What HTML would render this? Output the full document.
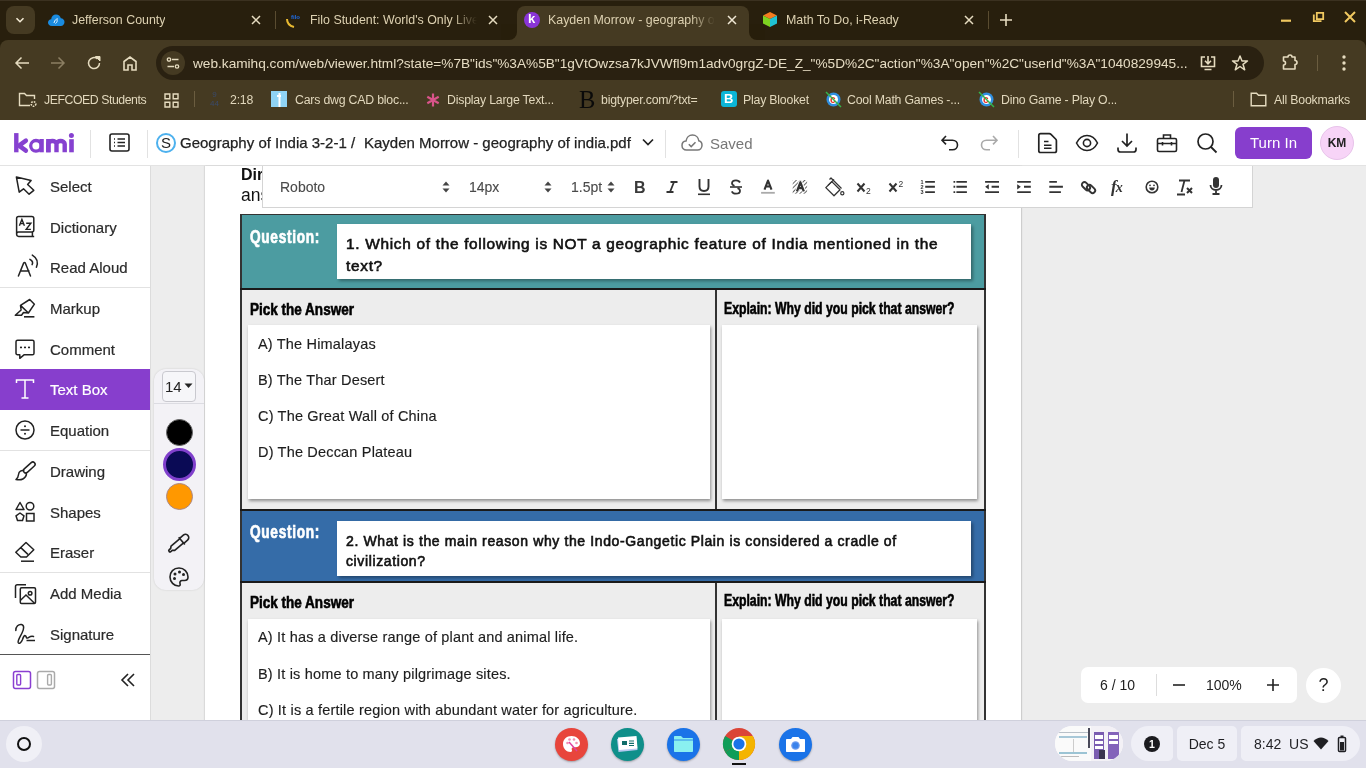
<!DOCTYPE html>
<html><head><meta charset="utf-8">
<style>
*{box-sizing:border-box;margin:0;padding:0}
html,body{width:1366px;height:768px;overflow:hidden;font-family:"Liberation Sans",sans-serif;background:#ededed}
#chromebg{left:0;top:0;width:1366px;height:120px;background:#271e0b}
.a{position:absolute}
svg{display:block;overflow:visible}
/* chrome */
#tabstrip{left:0;top:0;width:1366px;height:40px;background:#281f0d;border-top:1px solid #3b3120}
#toolbar{left:0;top:40px;width:1366px;height:80px;background:#453a22;border-radius:8px 8px 0 0}
.tabtxt{font-size:12.4px;color:#ddd1b1;white-space:nowrap;overflow:hidden}
.bm{font-size:12.3px;letter-spacing:-0.2px;color:#e2d8bd;white-space:nowrap;top:93px}
#omni{left:156px;top:46px;width:1108px;height:34px;border-radius:17px;background:#2a2111}
/* kami */
#header{left:0;top:120px;width:1366px;height:46px;background:#fff;border-bottom:1px solid #e3e3e3}
#sidebar{left:0;top:166px;width:151px;height:554px;background:#fff;border-right:1px solid #dcdcdc}
.si{left:0;width:150px;height:40px}
.si span{position:absolute;left:50px;top:11px;font-size:15px;color:#2b2b2b}
.si svg{position:absolute;left:14px;top:10px}
.sdiv{left:0;width:150px;height:1px;background:#e2e2e2}
#page{left:205px;top:166px;width:816px;height:554px;background:#fff;box-shadow:1px 0 1px rgba(0,0,0,0.13),-1px 0 1px rgba(0,0,0,0.08)}
#shelf{left:0;top:720px;width:1366px;height:48px;background:#e1e1ec;border-top:1px solid #cfd0dc}

.qlab{font-size:18px;font-weight:bold;color:#fff;-webkit-text-stroke:0.7px #fff;letter-spacing:0.9px;transform:scaleX(0.76);transform-origin:left top;white-space:nowrap}
.qbox{background:#fff;box-shadow:2px 2px 3px rgba(0,0,0,0.35)}
.qtxt{font-size:15.4px;font-weight:normal;-webkit-text-stroke:0.6px #111;color:#111;line-height:21.7px;letter-spacing:0.7px;white-space:nowrap}
.plab{font-size:16px;font-weight:bold;color:#000;-webkit-text-stroke:0.6px #000;transform:scaleX(0.845);transform-origin:left top;white-space:nowrap}
.abox{background:#fff;box-shadow:1px 2px 3px rgba(0,0,0,0.4)}
.atxt{font-size:14.5px;color:#1e1e1e;-webkit-text-stroke:0.15px #1e1e1e;letter-spacing:0.18px;white-space:nowrap}
</style></head><body><div id="wrap" style="position:absolute;left:0;top:0;width:1366px;height:768px;overflow:hidden;will-change:transform">

<div id="chromebg" class="a"></div>
<!-- TAB STRIP -->
<div id="tabstrip" class="a"></div>
<div class="a" style="left:6px;top:6px;width:29px;height:28px;border-radius:8px;background:#453a22"></div>
<svg class="a" style="left:15px;top:15px" width="10" height="10" viewBox="0 0 10 10"><path d="M1.5 3.2 L5 6.7 L8.5 3.2" stroke="#f3ead5" stroke-width="1.6" fill="none"/></svg>
<!-- tab1 -->
<svg class="a" style="left:48px;top:13px" width="17" height="14" viewBox="0 0 17 14"><path d="M4 13 C1 13 0 11 0 9.5 C0 7.5 1.5 6.3 3.2 6.2 C3.4 3.5 5.5 1.5 8 1.5 C10.5 1.5 12.3 3.2 12.8 5.2 C15 5.2 16.5 7 16.5 9 C16.5 11.3 15 13 12.8 13 Z" fill="#1a8be0"/><path d="M6 10 C6.5 7 8.5 5.5 10 6 M7.5 10.5 C9 9.5 9.5 8 9 7" stroke="#e8f4ff" stroke-width="1" fill="none"/></svg>
<div class="a tabtxt" style="left:72px;top:13px">Jefferson County</div>
<svg class="a" style="left:251px;top:15px" width="10" height="10" viewBox="0 0 10 10"><path d="M1 1L9 9M9 1L1 9" stroke="#e6dcc0" stroke-width="1.5"/></svg>
<div class="a" style="left:275px;top:11px;width:1px;height:18px;background:#5a4c30"></div>
<!-- tab2 -->
<svg class="a" style="left:285px;top:10px" width="16" height="18" viewBox="0 0 16 18"><path d="M2 9 C2 13 5 16 9 17" stroke="#e8b931" stroke-width="2" fill="none"/><text x="6" y="9" font-size="6" fill="#1f6be0" font-family="Liberation Sans" font-weight="bold">filo</text></svg>
<div class="a tabtxt" style="left:310px;top:13px;width:167px;-webkit-mask-image:linear-gradient(90deg,#000 85%,transparent)">Filo Student: World's Only Live Instant</div>
<svg class="a" style="left:488px;top:15px" width="10" height="10" viewBox="0 0 10 10"><path d="M1 1L9 9M9 1L1 9" stroke="#e6dcc0" stroke-width="1.5"/></svg>
<!-- active tab -->
<div class="a" style="left:517px;top:6px;width:232px;height:40px;border-radius:8px 8px 0 0;background:#453a22"></div>
<div class="a" style="left:509px;top:32px;width:8px;height:8px;background:#453a22"></div>
<div class="a" style="left:501px;top:24px;width:16px;height:16px;border-radius:0 0 8px 0;background:#271e0b"></div>
<div class="a" style="left:749px;top:32px;width:8px;height:8px;background:#453a22"></div>
<div class="a" style="left:749px;top:24px;width:16px;height:16px;border-radius:0 0 0 8px;background:#271e0b"></div>
<div class="a" style="left:524px;top:12px;width:16px;height:16px;border-radius:50%;background:#8a34d8"></div>
<div class="a" style="left:528px;top:11px;font-size:13px;font-weight:bold;color:#fff">k</div>
<div class="a tabtxt" style="left:548px;top:13px;width:167px;-webkit-mask-image:linear-gradient(90deg,#000 85%,transparent)">Kayden Morrow - geography of india.pdf</div>
<svg class="a" style="left:727px;top:15px" width="10" height="10" viewBox="0 0 10 10"><path d="M1 1L9 9M9 1L1 9" stroke="#f0e8d5" stroke-width="1.5"/></svg>
<!-- tab4 -->
<svg class="a" style="left:762px;top:11px" width="16" height="18" viewBox="0 0 16 18"><path d="M8 1 L15 4.5 L8 8 L1 4.5Z" fill="#f47c20"/><path d="M1 4.5 L8 8 L8 16 L1 12.5Z" fill="#7ed321"/><path d="M15 4.5 L8 8 L8 16 L15 12.5Z" fill="#1fc2d4"/></svg>
<div class="a tabtxt" style="left:786px;top:13px">Math To Do, i-Ready</div>
<svg class="a" style="left:964px;top:15px" width="10" height="10" viewBox="0 0 10 10"><path d="M1 1L9 9M9 1L1 9" stroke="#e6dcc0" stroke-width="1.5"/></svg>
<div class="a" style="left:988px;top:11px;width:1px;height:18px;background:#5a4c30"></div>
<svg class="a" style="left:999px;top:13px" width="14" height="14" viewBox="0 0 14 14"><path d="M7 1V13M1 7H13" stroke="#e6dcc0" stroke-width="1.6"/></svg>
<!-- window controls -->
<svg class="a" style="left:1280px;top:12px" width="14" height="14" viewBox="0 0 14 14"><path d="M1 8.7H11" stroke="#f0c860" stroke-width="2.2"/></svg>
<svg class="a" style="left:1311px;top:10px" width="14" height="14" viewBox="0 0 14 14"><path d="M5.8 2.8H12.2V9.2H5.8Z" stroke="#f0c860" stroke-width="1.8" fill="none"/><path d="M2.8 4.5V11.2H10.5" stroke="#f0c860" stroke-width="1.8" fill="none"/></svg>
<svg class="a" style="left:1343px;top:10px" width="14" height="14" viewBox="0 0 14 14"><path d="M2 2L12 12M12 2L2 12" stroke="#f0c860" stroke-width="2"/></svg>

<!-- TOOLBAR -->
<div id="toolbar" class="a"></div>
<svg class="a" style="left:13px;top:54px" width="18" height="18" viewBox="0 0 18 18"><path d="M16 9H3M8.5 3.5L3 9L8.5 14.5" stroke="#e6dcc0" stroke-width="1.5" fill="none"/></svg>
<svg class="a" style="left:49px;top:54px" width="18" height="18" viewBox="0 0 18 18"><path d="M2 9H15M9.5 3.5L15 9L9.5 14.5" stroke="#8c7f63" stroke-width="1.5" fill="none"/></svg>
<svg class="a" style="left:85px;top:54px" width="18" height="18" viewBox="0 0 18 18"><path d="M14.5 9A5.5 5.5 0 1 1 12.5 4.8" stroke="#e6dcc0" stroke-width="1.5" fill="none"/><path d="M10.5 2.5H15V7Z" fill="#e6dcc0" stroke="#e6dcc0" stroke-width="1"/></svg>
<svg class="a" style="left:121px;top:54px" width="18" height="18" viewBox="0 0 18 18"><path d="M3 16V7.5L9 3L15 7.5V16H11V11H7V16Z" stroke="#e6dcc0" stroke-width="1.6" fill="none"/></svg>
<div id="omni" class="a"></div>
<div class="a" style="left:161px;top:51px;width:24px;height:24px;border-radius:50%;background:#453a22"></div>
<svg class="a" style="left:166px;top:56px" width="14" height="14" viewBox="0 0 14 14"><path d="M6 3.5H12.5M1.5 10.5H8" stroke="#e6dcc0" stroke-width="1.4"/><circle cx="3" cy="3.5" r="1.7" stroke="#e6dcc0" stroke-width="1.3" fill="none"/><circle cx="11" cy="10.5" r="1.7" stroke="#e6dcc0" stroke-width="1.3" fill="none"/></svg>
<div class="a" style="left:193px;top:56px;font-size:13.65px;color:#e6dcc3;white-space:nowrap" id="url">web.kamihq.com/web/viewer.html?state=%7B"ids"%3A%5B"1gVtOwzsa7kJVWfl9m1adv0grgZ-DE_Z_"%5D%2C"action"%3A"open"%2C"userId"%3A"1040829945...</div>
<svg class="a" style="left:1199px;top:54px" width="18" height="18" viewBox="0 0 18 18"><path d="M6 3H2.5V12.5H15.5V3H12M9 2V9.5M6 6.8L9 9.8L12 6.8M5.5 15.5H12.5" stroke="#e6dcc0" stroke-width="1.6" fill="none"/></svg>
<svg class="a" style="left:1231px;top:54px" width="18" height="18" viewBox="0 0 18 18"><path d="M9 2L11 7H16.5L12 10.3L13.7 15.8L9 12.5L4.3 15.8L6 10.3L1.5 7H7Z" stroke="#e6dcc0" stroke-width="1.5" fill="none" stroke-linejoin="round"/></svg>
<svg class="a" style="left:1281px;top:54px" width="18" height="18" viewBox="0 0 18 18"><path d="M2.5 3H7A2 2 0 0 1 11 3H14V6.5A2 2 0 0 1 14 10.5V15H2.5V11A2 2 0 0 0 2.5 7Z" stroke="#e6dcc0" stroke-width="1.6" fill="none" stroke-linejoin="round"/></svg>
<div class="a" style="left:1317px;top:55px;width:1px;height:16px;background:#6b5d40"></div>
<svg class="a" style="left:1340px;top:54px" width="8" height="18" viewBox="0 0 8 18"><circle cx="4" cy="3" r="1.7" fill="#e6dcc0"/><circle cx="4" cy="9" r="1.7" fill="#e6dcc0"/><circle cx="4" cy="15" r="1.7" fill="#e6dcc0"/></svg>

<!-- BOOKMARKS -->
<svg class="a" style="left:18px;top:92px" width="20" height="16" viewBox="0 0 20 16"><path d="M12 13.5H1.5V1.5H6.5L8.5 3.5H16.5V7" stroke="#e6dcc0" stroke-width="1.4" fill="none"/><circle cx="15.5" cy="12" r="2.3" stroke="#e6dcc0" stroke-width="1.6" fill="none" stroke-dasharray="1.5 1"/></svg>
<div class="a bm" style="left:44px;letter-spacing:-0.45px">JEFCOED Students</div>
<svg class="a" style="left:164px;top:93px" width="15" height="15" viewBox="0 0 15 15"><path d="M1 1H5.8V5.8H1ZM9.2 1H14V5.8H9.2ZM1 9.2H5.8V14H1ZM9.2 9.2H14V14H9.2Z" stroke="#e6dcc0" stroke-width="1.4" fill="none"/></svg>
<div class="a" style="left:194px;top:91px;width:1px;height:16px;background:#6b5d40"></div>
<div class="a" style="left:210px;top:90px;font-size:8px;color:#3a4a6a;line-height:9px">&nbsp;9<br>44</div>
<div class="a bm" style="left:230px">2:18</div>
<div class="a" style="left:271px;top:91px;width:16px;height:16px;background:#8fd3f5"></div>
<svg class="a" style="left:271px;top:91px" width="16" height="16" viewBox="0 0 16 16"><path d="M8.5 2V16M6 5H10" stroke="#fff" stroke-width="2"/></svg>
<div class="a bm" style="left:295px">Cars dwg CAD bloc...</div>
<svg class="a" style="left:425px;top:92px" width="16" height="16" viewBox="0 0 16 16"><path d="M8 1.5V14.5M2.3 4.7L13.7 11.3M13.7 4.7L2.3 11.3" stroke="#d9548a" stroke-width="2.2"/></svg>
<div class="a bm" style="left:447px">Display Large Text...</div>
<div class="a" style="left:579px;top:86px;font-size:24.5px;line-height:28px;font-family:'Liberation Serif',serif;color:#0a0a0a">B</div>
<div class="a bm" style="left:601px">bigtyper.com/?txt=</div>
<div class="a" style="left:721px;top:91px;width:16px;height:16px;border-radius:3px;background:#0bb5d8"></div>
<div class="a" style="left:724px;top:91px;font-size:13px;font-weight:bold;color:#fff">B</div>
<div class="a bm" style="left:743px">Play Blooket</div>
<svg class="a" style="left:825px;top:91px" width="17" height="17" viewBox="0 0 17 17"><circle cx="8.5" cy="8.5" r="7" fill="#2f8fe0"/><circle cx="8.5" cy="8.5" r="4.5" fill="#fff"/><text x="5" y="12" font-size="10" fill="#e8332a" font-weight="bold" font-family="Liberation Sans">c</text><path d="M1 1L16 16" stroke="#35b44a" stroke-width="1.5"/></svg>
<div class="a bm" style="left:847px">Cool Math Games -...</div>
<svg class="a" style="left:978px;top:91px" width="17" height="17" viewBox="0 0 17 17"><circle cx="8.5" cy="8.5" r="7" fill="#2f8fe0"/><circle cx="8.5" cy="8.5" r="4.5" fill="#fff"/><text x="5" y="12" font-size="10" fill="#e8332a" font-weight="bold" font-family="Liberation Sans">c</text><path d="M1 1L16 16" stroke="#35b44a" stroke-width="1.5"/></svg>
<div class="a bm" style="left:1001px">Dino Game - Play O...</div>
<div class="a" style="left:1233px;top:91px;width:1px;height:16px;background:#6b5d40"></div>
<svg class="a" style="left:1250px;top:92px" width="17" height="15" viewBox="0 0 17 15"><path d="M1.2 1.2H6.5L8.5 3.2H15.8V13.8H1.2Z" stroke="#e6dcc0" stroke-width="1.4" fill="none"/></svg>
<div class="a bm" style="left:1274px">All Bookmarks</div>

<!-- KAMI HEADER -->
<div id="header" class="a"></div>
<svg class="a" style="left:10px;top:128px" width="70" height="30" viewBox="0 0 70 30"><g fill="#8641d0"><rect x="4.1" y="5.1" width="4.4" height="19.2"/><rect x="29.4" y="11" width="4.4" height="13.3"/><rect x="36.1" y="11" width="4.5" height="13.3"/><rect x="59.2" y="11.2" width="4.6" height="13.1"/><circle cx="61.4" cy="7.4" r="2.5"/></g><g stroke="#8641d0" fill="none"><path d="M15.9 12.6L9 17.6L15.9 22.6" stroke-width="4.4" stroke-linecap="round" stroke-linejoin="round"/><circle cx="26" cy="17.8" r="5.3" stroke-width="3.3"/><path d="M38.35 24.3V16C38.35 12 46.5 12 46.5 16V24.3M46.5 16C46.5 12 54.7 12 54.7 16V24.3" stroke-width="4.4"/></g></svg>
<div class="a" style="left:90px;top:130px;width:1px;height:28px;background:#e2e2e2"></div>
<svg class="a" style="left:109px;top:133px" width="21" height="19" viewBox="0 0 21 19"><rect x="1" y="1" width="19" height="17" rx="2" stroke="#222" stroke-width="1.6" fill="none"/><path d="M5 6H6M5 9.5H6M5 13H6M8.5 6H16M8.5 9.5H16M8.5 13H16" stroke="#222" stroke-width="1.5"/></svg>
<div class="a" style="left:147px;top:130px;width:1px;height:28px;background:#e2e2e2"></div>
<div class="a" style="left:156px;top:133px;width:20px;height:20px;border-radius:50%;border:2px solid #4db1ee"></div>
<div class="a" style="left:161px;top:134px;font-size:15px;color:#222">S</div>
<div class="a" style="left:180px;top:134px;font-size:15px;color:#222;-webkit-text-stroke:0.25px #222;white-space:nowrap" id="crumb1">Geography of India 3-2-1 /</div>
<div class="a" style="left:364px;top:134px;font-size:15px;color:#222;-webkit-text-stroke:0.25px #222;white-space:nowrap" id="crumb2">Kayden Morrow - geography of india.pdf</div>
<svg class="a" style="left:642px;top:138px" width="12" height="8" viewBox="0 0 12 8"><path d="M1 1.5L6 6.5L11 1.5" stroke="#222" stroke-width="1.7" fill="none"/></svg>
<div class="a" style="left:665px;top:130px;width:1px;height:28px;background:#e2e2e2"></div>
<svg class="a" style="left:681px;top:134px" width="22" height="17" viewBox="0 0 22 17"><path d="M5.5 16C2.8 16 1 14 1 11.5C1 9.2 2.7 7.3 5 7.1C5.5 3.7 8 1 11.5 1C15 1 17.5 3.6 17.8 6.8C20 7.3 21 9.2 21 11.3C21 14 19 16 16.5 16Z" stroke="#777" stroke-width="1.5" fill="none"/><path d="M7.8 10.3L10.2 12.6L14.5 8.3" stroke="#777" stroke-width="1.5" fill="none"/></svg>
<div class="a" style="left:710px;top:135px;font-size:15px;color:#777">Saved</div>
<svg class="a" style="left:940px;top:133px" width="20" height="20" viewBox="0 0 20 20"><path d="M6 3L2 7.2L6 11.4M2.5 7.2H12.5C15.5 7.2 17.5 9.3 17.5 12C17.5 14.7 15.5 16.8 12.5 16.8H9" stroke="#222" stroke-width="1.6" fill="none"/></svg>
<svg class="a" style="left:979px;top:133px" width="20" height="20" viewBox="0 0 20 20"><path d="M14 3L18 7.2L14 11.4M17.5 7.2H7.5C4.5 7.2 2.5 9.3 2.5 12C2.5 14.7 4.5 16.8 7.5 16.8H11" stroke="#aaa" stroke-width="1.6" fill="none"/></svg>
<div class="a" style="left:1018px;top:130px;width:1px;height:28px;background:#e2e2e2"></div>
<svg class="a" style="left:1037px;top:132px" width="20" height="22" viewBox="0 0 20 22"><path d="M3.6 1.6H12.3C13 1.6 13.5 1.9 14 2.4L18.6 7C19.1 7.5 19.4 8 19.4 8.7V18.7Q19.4 20.5 17.6 20.5H3.6Q1.8 20.5 1.8 18.7V3.4Q1.8 1.6 3.6 1.6Z" stroke="#222" stroke-width="1.7" fill="none"/><path d="M7 9.5H11.5M7 13.2H14.5M7 16.3H14.5" stroke="#222" stroke-width="1.6"/></svg>
<svg class="a" style="left:1075px;top:134px" width="24" height="18" viewBox="0 0 24 18"><path d="M1.5 9C4 4 7.8 1.5 12 1.5C16.2 1.5 20 4 22.5 9C20 14 16.2 16.5 12 16.5C7.8 16.5 4 14 1.5 9Z" stroke="#222" stroke-width="1.6" fill="none"/><circle cx="12" cy="9" r="3.6" stroke="#222" stroke-width="1.6" fill="none"/></svg>
<svg class="a" style="left:1116px;top:132px" width="22" height="22" viewBox="0 0 22 22"><path d="M11 1.5V14M6 9L11 14L16 9M2 15.5V17.5C2 19 3 20 4.5 20H17.5C19 20 20 19 20 17.5V15.5" stroke="#222" stroke-width="1.7" fill="none"/></svg>
<svg class="a" style="left:1156px;top:133px" width="22" height="20" viewBox="0 0 22 20"><rect x="1.5" y="5.5" width="19" height="13" rx="1.5" stroke="#222" stroke-width="1.6" fill="none"/><path d="M7.5 5.5V2H14.5V5.5M1.5 10.5H20.5M6.5 9V12.5M15.5 9V12.5" stroke="#222" stroke-width="1.6" fill="none"/></svg>
<svg class="a" style="left:1196px;top:132px" width="22" height="22" viewBox="0 0 22 22"><circle cx="9.5" cy="9.5" r="7.5" stroke="#222" stroke-width="1.7" fill="none"/><path d="M15 15L20.5 20.5" stroke="#222" stroke-width="1.8"/></svg>
<div class="a" style="left:1235px;top:127px;width:77px;height:32px;border-radius:6px;background:#873ecd"></div>
<div class="a" style="left:1235px;top:134px;width:77px;text-align:center;font-size:15px;color:#fff">Turn In</div>
<div class="a" style="left:1320px;top:126px;width:34px;height:34px;border-radius:50%;background:#f7d4f7;border:1px solid #e8c3ea"></div>
<div class="a" style="left:1320px;top:136px;width:34px;text-align:center;font-size:12px;font-weight:bold;color:#222">KM</div>
<div id="sidebar" class="a"></div>
<div class="a" style="left:14px;top:175px"><svg width="22" height="22" viewBox="0 0 22 22"><path d="M2.4 2L17.1 5.4L13.6 9.5L19.8 15.3L15.1 19.2L9.5 13.8L5.2 17.1Z" stroke="#222" stroke-width="1.5" fill="none" stroke-linejoin="round"/></svg></div>
<div class="a" style="left:50px;top:178px;font-size:15px;color:#2b2b2b;-webkit-text-stroke:0.2px #2b2b2b;white-space:nowrap">Select</div>
<div class="a" style="left:14px;top:216px"><svg width="22" height="22" viewBox="0 0 22 22"><path d="M2.6 18.4V2.5Q2.6 0.5 4.6 0.5H17.8Q19.8 0.5 19.8 2.5V13.9Q19.8 15.9 17.8 15.9H4.6Q2.6 15.9 2.6 18.1Q2.6 20.4 4.6 20.4H20.2M18.4 15.9V20.4" stroke="#222" stroke-width="1.5" fill="none" stroke-linejoin="round"/><path d="M5.4 9.7L7.9 3.4L10.4 9.7M6.3 7.6H9.5M12.2 7.3H16.9L12.2 13.4H16.9" stroke="#222" stroke-width="1.4" fill="none"/></svg></div>
<div class="a" style="left:50px;top:219px;font-size:15px;color:#2b2b2b;-webkit-text-stroke:0.2px #2b2b2b;white-space:nowrap">Dictionary</div>
<div class="a" style="left:14px;top:256px"><svg width="22" height="22" viewBox="0 0 22 22"><path d="M4.4 20L9.6 7.2Q10.5 5.6 11.4 7.2L16.5 20M6.4 15.1H15" stroke="#222" stroke-width="1.5" fill="none" stroke-linecap="round"/><path d="M15.9 3.4Q19.8 5.6 18.1 8.7M18.3 -0.9Q25.5 3.5 22.4 11.2" stroke="#222" stroke-width="1.5" fill="none" stroke-linecap="round"/></svg></div>
<div class="a" style="left:50px;top:259px;font-size:15px;color:#2b2b2b;-webkit-text-stroke:0.2px #2b2b2b;white-space:nowrap">Read Aloud</div>
<div class="a" style="left:14px;top:297px"><svg width="22" height="22" viewBox="0 0 22 22"><path d="M6.5 8.4L15.7 2.5L20.4 7.2L14.4 16Z M6.5 8.4L7.1 13L1.3 18.3H7.5L9.5 15.5L14.4 16" stroke="#222" stroke-width="1.5" fill="none" stroke-linejoin="round"/><path d="M10 19.8H20.4" stroke="#222" stroke-width="1.6"/></svg></div>
<div class="a" style="left:50px;top:300px;font-size:15px;color:#2b2b2b;-webkit-text-stroke:0.2px #2b2b2b;white-space:nowrap">Markup</div>
<div class="a" style="left:14px;top:338px"><svg width="22" height="22" viewBox="0 0 22 22"><path d="M2 3.8C2 2.9 2.7 2.2 3.6 2.2H18.4C19.3 2.2 20 2.9 20 3.8V15.2C20 16.1 19.3 16.8 18.4 16.8H10L5.8 20.3V16.8H3.6C2.7 16.8 2 16.1 2 15.2Z" stroke="#222" stroke-width="1.5" fill="none" stroke-linejoin="round"/><path d="M6.8 9.4H7.2M10.8 9.4H11.2M14.8 9.4H15.2" stroke="#222" stroke-width="1.8" stroke-linecap="round"/></svg></div>
<div class="a" style="left:50px;top:341px;font-size:15px;color:#2b2b2b;-webkit-text-stroke:0.2px #2b2b2b;white-space:nowrap">Comment</div>
<div class="a" style="left:0;top:369px;width:150px;height:41px;background:#873ecd"></div>
<div class="a" style="left:14px;top:378px"><svg width="22" height="22" viewBox="0 0 22 22"><path d="M2.5 5V2H19.5V5M11 2V20M7.5 20H14.5" stroke="#fff" stroke-width="1.5" fill="none"/></svg></div>
<div class="a" style="left:50px;top:381px;font-size:15px;color:#fff;-webkit-text-stroke:0.2px #fff;white-space:nowrap">Text Box</div>
<div class="a" style="left:14px;top:419px"><svg width="22" height="22" viewBox="0 0 22 22"><circle cx="11" cy="11" r="9" stroke="#222" stroke-width="1.5" fill="none"/><path d="M6.5 11H15.5" stroke="#222" stroke-width="1.5" fill="none"/><circle cx="11" cy="7.3" r="1" fill="#222"/><circle cx="11" cy="14.7" r="1" fill="#222"/></svg></div>
<div class="a" style="left:50px;top:422px;font-size:15px;color:#2b2b2b;-webkit-text-stroke:0.2px #2b2b2b;white-space:nowrap">Equation</div>
<div class="a" style="left:14px;top:460px"><svg width="22" height="22" viewBox="0 0 22 22"><rect x="8.3" y="5.2" width="14" height="4.6" rx="2.3" transform="rotate(-42 15.25 7.5)" stroke="#222" stroke-width="1.5" fill="none"/><path d="M10.2 10.8C7.5 9.8 4.8 11.5 4.6 14.2C4.4 16.2 3.8 18 2 19.5C5.5 20.2 9.8 19.3 11.6 16.5C12.6 15 12.5 13.3 11.6 12.3" stroke="#222" stroke-width="1.5" fill="none" stroke-linejoin="round"/></svg></div>
<div class="a" style="left:50px;top:463px;font-size:15px;color:#2b2b2b;-webkit-text-stroke:0.2px #2b2b2b;white-space:nowrap">Drawing</div>
<div class="a" style="left:14px;top:501px"><svg width="22" height="22" viewBox="0 0 22 22"><path d="M6 1.5L10 8.5H2Z" stroke="#222" stroke-width="1.5" fill="none" stroke-linejoin="round"/><circle cx="16" cy="5.3" r="3.8" stroke="#222" stroke-width="1.5" fill="none"/><path d="M6 12L10 14.8L8.5 19.5H3.5L2 14.8Z" stroke="#222" stroke-width="1.5" fill="none" stroke-linejoin="round"/><rect x="12.5" y="12.5" width="7.5" height="7.5" stroke="#222" stroke-width="1.5" fill="none"/></svg></div>
<div class="a" style="left:50px;top:504px;font-size:15px;color:#2b2b2b;-webkit-text-stroke:0.2px #2b2b2b;white-space:nowrap">Shapes</div>
<div class="a" style="left:14px;top:541px"><svg width="22" height="22" viewBox="0 0 22 22"><path d="M12 1.5L19.8 8.8L12.5 16H6.8L1.8 11.2Z M6.8 6.6L13.9 13.4" stroke="#222" stroke-width="1.5" fill="none" stroke-linejoin="round"/><path d="M7 20.2H20" stroke="#222" stroke-width="1.5" fill="none"/></svg></div>
<div class="a" style="left:50px;top:544px;font-size:15px;color:#2b2b2b;-webkit-text-stroke:0.2px #2b2b2b;white-space:nowrap">Eraser</div>
<div class="a" style="left:14px;top:582px"><svg width="22" height="22" viewBox="0 0 22 22"><path d="M1.5 16V4.5Q1.5 2.8 3.2 2.8H12" stroke="#222" stroke-width="1.5" fill="none"/><rect x="6.3" y="5.7" width="15.2" height="15.8" rx="1.2" stroke="#222" stroke-width="1.5" fill="none"/><circle cx="16.1" cy="11.2" r="1.8" stroke="#222" stroke-width="1.5" fill="none"/><path d="M6.3 18.5L12 13L20.5 21.2" stroke="#222" stroke-width="1.5" fill="none"/></svg></div>
<div class="a" style="left:50px;top:585px;font-size:15px;color:#2b2b2b;-webkit-text-stroke:0.2px #2b2b2b;white-space:nowrap">Add Media</div>
<div class="a" style="left:14px;top:623px"><svg width="22" height="22" viewBox="0 0 22 22"><path d="M1.8 7.5C1.8 3.5 4.5 1 7.5 1.5C10.5 2 10 6 8 10C6 14 3.5 17.5 4.2 19.5C4.8 21 7 20.5 8.5 16.5C9.5 13.5 10.3 12 11.5 12.8C12.5 13.5 12 15.5 13.5 15C15 14.5 16.5 12.5 19.5 13.5" stroke="#222" stroke-width="1.5" fill="none" stroke-linecap="round"/><path d="M12.5 17.5H21" stroke="#222" stroke-width="1.5" fill="none"/></svg></div>
<div class="a" style="left:50px;top:626px;font-size:15px;color:#2b2b2b;-webkit-text-stroke:0.2px #2b2b2b;white-space:nowrap">Signature</div>
<div class="a" style="left:0;top:287px;width:150px;height:1px;background:#e2e2e2"></div>
<div class="a" style="left:0;top:450px;width:150px;height:1px;background:#e2e2e2"></div>
<div class="a" style="left:0;top:572px;width:150px;height:1px;background:#e2e2e2"></div>
<div class="a" style="left:0;top:654px;width:150px;height:1px;background:#555"></div>
<svg class="a" style="left:12px;top:670px" width="46" height="20" viewBox="0 0 46 20"><rect x="1.5" y="1.5" width="17" height="17" rx="2" stroke="#8a3fd1" stroke-width="1.5" fill="none"/><rect x="4.8" y="4.5" width="3.8" height="10.5" rx="1" stroke="#8a3fd1" stroke-width="1.4" fill="none"/><rect x="25.5" y="1.5" width="17" height="17" rx="2" stroke="#aaa" stroke-width="1.5" fill="none"/><rect x="35.6" y="4.5" width="3.8" height="10.5" rx="1" stroke="#aaa" stroke-width="1.4" fill="none"/></svg>
<svg class="a" style="left:120px;top:672px" width="16" height="16" viewBox="0 0 16 16"><path d="M8 2L2 8L8 14M14 2L8 8L14 14" stroke="#222" stroke-width="1.6" fill="none"/></svg>
<div id="page" class="a"></div>
<div class="a" style="left:241px;top:166px;font-size:16px;font-weight:bold;color:#111">Dir</div>
<div class="a" style="left:241px;top:185px;font-size:17.5px;color:#111">ans</div>
<!-- table -->
<div class="a" style="left:240px;top:214px;width:746px;height:520px;border:2px solid #333;border-bottom:none;background:#ededed"></div>
<!-- Q1 -->
<div class="a" style="left:242px;top:215px;width:742px;height:74px;background:#4c9ca1"></div>
<div class="a" style="left:240px;top:288px;width:746px;height:2px;background:#1a1a1a"></div>
<div class="a qlab" style="left:250px;top:226.5px">Question:</div>
<div class="a qbox" style="left:337px;top:224px;width:634px;height:55px"></div>
<div class="a qtxt" style="left:346px;top:233px">1. Which of the following is NOT a geographic feature of India mentioned in the<br>text?</div>
<div class="a" style="left:715px;top:290px;width:2px;height:220px;background:#333"></div>
<div class="a plab" style="left:250px;top:301px">Pick the Answer</div>
<div class="a plab" style="left:724px;top:300px;transform:scaleX(0.765)">Explain: Why did you pick that answer?</div>
<div class="a abox" style="left:248px;top:325px;width:462px;height:174px"></div>
<div class="a abox" style="left:722px;top:325px;width:255px;height:174px"></div>
<div class="a atxt" style="left:258px;top:336px">A) The Himalayas</div>
<div class="a atxt" style="left:258px;top:372px">B) The Thar Desert</div>
<div class="a atxt" style="left:258px;top:408px">C) The Great Wall of China</div>
<div class="a atxt" style="left:258px;top:444px">D) The Deccan Plateau</div>
<!-- Q2 -->
<div class="a" style="left:240px;top:509px;width:746px;height:2px;background:#1a1a1a"></div>
<div class="a" style="left:242px;top:511px;width:742px;height:71px;background:#356ca8"></div>
<div class="a" style="left:240px;top:581px;width:746px;height:2px;background:#1a1a1a"></div>
<div class="a qlab" style="left:250px;top:522px">Question:</div>
<div class="a qbox" style="left:337px;top:521px;width:634px;height:55px"></div>
<div class="a qtxt" style="left:346px;top:531px;line-height:20px;font-size:14px;letter-spacing:0.62px">2. What is the main reason why the Indo-Gangetic Plain is considered a cradle of<br>civilization?</div>
<div class="a" style="left:715px;top:583px;width:2px;height:140px;background:#333"></div>
<div class="a plab" style="left:250px;top:594px">Pick the Answer</div>
<div class="a plab" style="left:724px;top:592px;transform:scaleX(0.765)">Explain: Why did you pick that answer?</div>
<div class="a abox" style="left:248px;top:619px;width:462px;height:174px"></div>
<div class="a abox" style="left:722px;top:619px;width:255px;height:174px"></div>
<div class="a atxt" style="left:258px;top:629px">A) It has a diverse range of plant and animal life.</div>
<div class="a atxt" style="left:258px;top:666px">B) It is home to many pilgrimage sites.</div>
<div class="a atxt" style="left:258px;top:702px">C) It is a fertile region with abundant water for agriculture.</div>
<!-- TEXT TOOLBAR -->
<div class="a" style="left:262px;top:166px;width:991px;height:42px;background:#fff;border:1px solid #d4d4d4;border-top:none"></div>
<div class="a" style="left:280px;top:179px;font-size:14px;color:#4a4a4a;-webkit-text-stroke:0.1px #4a4a4a">Roboto</div>
<svg class="a" style="left:442px;top:181px" width="8" height="12" viewBox="0 0 8 12"><path d="M4 0.5L7.5 4.5H0.5ZM4 11.5L7.5 7.5H0.5Z" fill="#444"/></svg>
<div class="a" style="left:469px;top:179px;font-size:14px;color:#4a4a4a;-webkit-text-stroke:0.1px #4a4a4a">14px</div>
<svg class="a" style="left:544px;top:181px" width="8" height="12" viewBox="0 0 8 12"><path d="M4 0.5L7.5 4.5H0.5ZM4 11.5L7.5 7.5H0.5Z" fill="#444"/></svg>
<div class="a" style="left:571px;top:179px;font-size:14px;color:#4a4a4a;-webkit-text-stroke:0.1px #4a4a4a">1.5pt</div>
<svg class="a" style="left:607px;top:181px" width="8" height="12" viewBox="0 0 8 12"><path d="M4 0.5L7.5 4.5H0.5ZM4 11.5L7.5 7.5H0.5Z" fill="#444"/></svg>
<div class="a" style="left:634px;top:179px;font-size:16px;font-weight:bold;color:#3a3a3a">B</div>
<svg class="a" style="left:666px;top:181px" width="12" height="12" viewBox="0 0 12 12"><path d="M4.5 1H11.5M0.5 11H7.5M8 1L4 11" stroke="#333" stroke-width="1.8" fill="none"/></svg>
<svg class="a" style="left:697px;top:178px" width="14" height="18" viewBox="0 0 14 18"><path d="M2.5 1V8.5C2.5 11.5 4.5 13 7 13C9.5 13 11.5 11.5 11.5 8.5V1" stroke="#333" stroke-width="1.9" fill="none"/><path d="M1 16.3H13" stroke="#333" stroke-width="1.6"/></svg>
<svg class="a" style="left:729px;top:179px" width="14" height="16" viewBox="0 0 14 16"><path d="M11 3.5C10.3 2 8.8 1.3 7 1.3C4.5 1.3 3 2.5 3 4.2C3 5.5 4 6.3 5.5 6.8M8.5 9.2C10 9.7 11 10.5 11 12C11 13.7 9.3 14.7 7 14.7C5 14.7 3.5 13.8 2.8 12.3" stroke="#333" stroke-width="1.8" fill="none"/><path d="M1 8H13" stroke="#333" stroke-width="1.6"/></svg>
<svg class="a" style="left:755px;top:172px" width="95" height="30" viewBox="755 172 95 30"><defs><pattern id="hatch2" width="3" height="3" patternUnits="userSpaceOnUse" patternTransform="rotate(45)"><rect width="1" height="3" fill="#666"/></pattern></defs><path d="M764.5 189.6L768 180.6L771.5 189.6M765.8 186.5H770.2" stroke="#333" stroke-width="2.1" fill="none" stroke-linejoin="round"/><path d="M761.1 192.8H774.8" stroke="#aaa" stroke-width="1.8"/><rect x="792.7" y="180" width="14.4" height="13.7" fill="url(#hatch2)"/><path d="M797 191.3L800.4 182.3L803.8 191.3M798.3 188.2H802.5" stroke="#fff" stroke-width="4" fill="none" stroke-linejoin="round"/><path d="M797 191.3L800.4 182.3L803.8 191.3M798.3 188.2H802.5" stroke="#333" stroke-width="2.3" fill="none" stroke-linejoin="round"/><path d="M825.8 187.6L831.8 181.6L840 189.8L834 195.8Z" stroke="#333" stroke-width="1.3" fill="none" stroke-linejoin="round"/><path d="M828 185.4L834 179.4M829.5 179.5L831 178L841.5 188.5" stroke="#333" stroke-width="1.3" fill="none" stroke-linejoin="round"/><circle cx="842.3" cy="193.2" r="1.6" stroke="#333" stroke-width="1.2" fill="none"/></svg>
<svg class="a" style="left:856px;top:182px" width="18" height="14" viewBox="0 0 18 14"><path d="M1.5 1.5L8.5 9.5M8.5 1.5L1.5 9.5" stroke="#333" stroke-width="2"/><text x="10" y="12" font-size="8.5" fill="#333" font-family="Liberation Sans">2</text></svg>
<svg class="a" style="left:888px;top:178px" width="18" height="16" viewBox="0 0 18 16"><path d="M1.5 5.5L8.5 13.5M8.5 5.5L1.5 13.5" stroke="#333" stroke-width="2"/><text x="10.5" y="9" font-size="8.5" fill="#333" font-family="Liberation Sans">2</text></svg>
<svg class="a" style="left:915px;top:172px" width="155" height="30" viewBox="915 172 155 30"><g stroke="#333" stroke-width="1.9" fill="none"><path d="M925.2 181.9H934.9M925.2 186.8H934.9M925.2 192.1H934.9"/><path d="M956.4 181.9H966.9M956.4 186.8H966.9M956.4 192.1H966.9"/><path d="M953.5 181.9H955.2M953.5 186.8H955.2M953.5 192.1H955.2"/><path d="M985.1 181.9H999M991.6 186.8H999M985.1 192.1H999"/><path d="M1017.2 181.9H1030.8M1024 186.8H1030.8M1017.2 192.1H1030.8"/><path d="M1049.3 181.9H1056.9M1049.3 186.8H1062.9M1049.3 192.1H1060.9"/></g><path d="M988.8 184.2V189.4L985.2 186.8Z" fill="#333"/><path d="M1017.2 184.2V189.4L1020.8 186.8Z" fill="#333"/><text x="920.6" y="183.9" font-size="5.5" font-weight="bold" fill="#333" font-family="Liberation Sans">1</text><text x="920.6" y="188.9" font-size="5.5" font-weight="bold" fill="#333" font-family="Liberation Sans">2</text><text x="920.6" y="193.9" font-size="5.5" font-weight="bold" fill="#333" font-family="Liberation Sans">3</text></svg>
<svg class="a" style="left:1080px;top:179px" width="17" height="17" viewBox="0 0 17 17"><rect x="1.2" y="4.6" width="9.5" height="5.2" rx="2.6" transform="rotate(45 6 7.2)" stroke="#333" stroke-width="1.9" fill="none"/><rect x="6.3" y="7.3" width="9.5" height="5.2" rx="2.6" transform="rotate(45 11 9.9)" stroke="#333" stroke-width="1.9" fill="none"/></svg>
<div class="a" style="left:1111px;top:177px;font-size:17px;font-style:italic;font-weight:bold;color:#333;font-family:'Liberation Serif',serif;letter-spacing:-1px">f<span style="font-size:14px">x</span></div>
<svg class="a" style="left:1145px;top:180px" width="14" height="14" viewBox="0 0 14 14"><circle cx="7" cy="7" r="5.8" stroke="#333" stroke-width="1.6" fill="none"/><circle cx="5" cy="5.3" r="0.9" fill="#333"/><circle cx="9" cy="5.3" r="0.9" fill="#333"/><path d="M4.2 7.5H9.8C9.8 9.5 8.5 10.5 7 10.5C5.5 10.5 4.2 9.5 4.2 7.5Z" fill="#333"/></svg>
<svg class="a" style="left:1175px;top:177px" width="20" height="20" viewBox="0 0 20 20"><path d="M4 3.5H15M9.5 3.5L6.5 15M2 17.5H10" stroke="#333" stroke-width="1.8" fill="none"/><path d="M12 11L17 16M17 11L12 16" stroke="#333" stroke-width="2"/></svg>
<svg class="a" style="left:1209px;top:176px" width="14" height="20" viewBox="0 0 14 20"><rect x="4" y="1" width="6" height="11" rx="3" fill="#333"/><path d="M1.5 9C1.5 12 4 14 7 14C10 14 12.5 12 12.5 9M7 14V17M3.5 18H10.5" stroke="#333" stroke-width="1.8" fill="none"/></svg>

<!-- PALETTE -->
<div class="a" style="left:154px;top:369px;width:50px;height:221px;border-radius:12px;background:#f3f2f6;box-shadow:0 0 2px rgba(0,0,0,0.15)"></div>
<div class="a" style="left:162px;top:371px;width:34px;height:31px;border:1px solid #c9c9cf;border-radius:4px;background:#f6f6f9"></div>
<div class="a" style="left:165px;top:378px;font-size:15px;color:#222">14</div>
<svg class="a" style="left:184px;top:383px" width="9" height="6" viewBox="0 0 9 6"><path d="M0.5 0.5H8.5L4.5 5Z" fill="#222"/></svg>
<div class="a" style="left:154px;top:403px;width:50px;height:1px;background:#dcdce2"></div>
<div class="a" style="left:166px;top:419px;width:27px;height:27px;border-radius:50%;background:#000;border:1px solid #666"></div>
<div class="a" style="left:163px;top:448px;width:33px;height:33px;border-radius:50%;background:#0a0a55;border:3px solid #8040cc"></div>
<div class="a" style="left:166px;top:483px;width:27px;height:27px;border-radius:50%;background:#ff9800;border:1px solid #a88"></div>
<svg class="a" style="left:166px;top:530px" width="24" height="24" viewBox="0 0 24 24"><g transform="translate(3.1 21.4) rotate(-40) scale(1.1)" stroke="#222" stroke-width="1.5" fill="none" stroke-linejoin="round"><path d="M15 -2.6H4.5L2.8 -1.1H1.1A1.1 1.1 0 0 0 1.1 1.1H2.8L4.5 2.6H15"/><path d="M15 -4.3V4.3"/><path d="M15 -3H19.4A3 3 0 0 1 19.4 3H15"/></g></svg>
<svg class="a" style="left:168px;top:566px" width="22" height="22" viewBox="0 0 22 22"><path d="M11 2C5.5 2 2 6 2 11C2 16 6 20 10.5 20C12 20 12.5 19 12 17.5C11.5 16 12.5 14.5 14 14.5H16.5C18.5 14.5 20 13 20 11C20 6 16 2 11 2Z" stroke="#222" stroke-width="1.6" fill="none"/><circle cx="7" cy="8" r="1.5" fill="#222"/><circle cx="11.5" cy="6" r="1.5" fill="#222"/><circle cx="15.5" cy="8.5" r="1.5" fill="#222"/><circle cx="6.5" cy="12.5" r="1.5" fill="#222"/></svg>

<!-- ZOOM WIDGET -->
<div class="a" style="left:1081px;top:667px;width:216px;height:36px;border-radius:7px;background:#fff"></div>
<div class="a" style="left:1100px;top:677px;font-size:14px;color:#222">6 / 10</div>
<div class="a" style="left:1156px;top:674px;width:1px;height:22px;background:#ddd"></div>
<svg class="a" style="left:1172px;top:678px" width="14" height="14" viewBox="0 0 14 14"><path d="M1 7H13" stroke="#222" stroke-width="1.6"/></svg>
<div class="a" style="left:1206px;top:677px;font-size:14px;color:#222">100%</div>
<svg class="a" style="left:1266px;top:678px" width="14" height="14" viewBox="0 0 14 14"><path d="M1 7H13M7 1V13" stroke="#222" stroke-width="1.6"/></svg>
<div class="a" style="left:1306px;top:668px;width:35px;height:35px;border-radius:50%;background:#fff"></div>
<div class="a" style="left:1306px;top:675px;width:35px;text-align:center;font-size:18px;color:#222">?</div>
<div id="shelf" class="a"></div>
<div class="a" style="left:6px;top:726px;width:36px;height:36px;border-radius:50%;background:#f0f0f6"></div>
<div class="a" style="left:17px;top:737px;width:14px;height:14px;border-radius:50%;border:2.5px solid #111"></div>
<!-- apps -->
<div class="a" style="left:555px;top:728px;width:33px;height:33px;border-radius:50%;background:#e8453c;box-shadow:0 1px 2px rgba(0,0,0,.3)"></div>
<svg class="a" style="left:560px;top:733px" width="23" height="23" viewBox="0 0 23 23"><path d="M11.5 3C6.5 3 3 6.5 3 11C3 15.5 6.5 19 10.5 19C12 19 12.3 18 11.8 16.8C11.3 15.5 12.2 14.3 13.5 14.3H15.5C18 14.3 20 12.8 20 10.5C20 6.3 16.5 3 11.5 3Z" fill="#fff"/><circle cx="7.5" cy="10" r="1.3" fill="#f48fb1"/><circle cx="9.5" cy="6.5" r="1.3" fill="#f48fb1"/><circle cx="14" cy="6.5" r="1.3" fill="#f48fb1"/><circle cx="16.5" cy="10" r="1.3" fill="#f48fb1"/><path d="M9 9L17 18" stroke="#e040a0" stroke-width="1.5"/></svg>
<div class="a" style="left:611px;top:728px;width:33px;height:33px;border-radius:50%;background:#0f8f8a;box-shadow:0 1px 2px rgba(0,0,0,.3)"></div>
<svg class="a" style="left:614px;top:734px" width="27" height="21" viewBox="0 0 27 21"><path d="M3 5L22 3L23.5 16L4.5 18Z" fill="#b6c8f0"/><path d="M4 3.5L22.5 2L23.5 14.5L5 16Z" fill="#fff"/><rect x="8" y="7" width="5" height="4" fill="#0f6d6a"/><path d="M15 7H20M15 9.3H20M15 11.5H20" stroke="#0f6d6a" stroke-width="1.2"/></svg>
<div class="a" style="left:667px;top:728px;width:33px;height:33px;border-radius:50%;background:#1a73e8;box-shadow:0 1px 2px rgba(0,0,0,.3)"></div>
<svg class="a" style="left:673px;top:735px" width="21" height="18" viewBox="0 0 21 18"><path d="M1 2C1 1.4 1.4 1 2 1H8L10 3H19C19.6 3 20 3.4 20 4V16C20 16.6 19.6 17 19 17H2C1.4 17 1 16.6 1 16Z" fill="#8af0f0"/><path d="M1 5H20" stroke="#1a73e8" stroke-width="0.8"/></svg>
<svg class="a" style="left:722px;top:727px" width="34" height="34" viewBox="0 0 34 34"><circle cx="17" cy="17" r="16" fill="#db4437"/><path d="M17 17L3.1 25A16 16 0 0 0 17 33Z" fill="#0f9d58"/><path d="M17 17L17 33A16 16 0 0 0 30.9 25L30.9 9Z" fill="#f4b400"/><path d="M17 17L3.1 25A16 16 0 0 1 3.1 9Z" fill="#0f9d58"/><path d="M17 9H30.9A16 16 0 0 1 30.9 25L22 17Z" fill="#f4b400"/><circle cx="17" cy="17" r="7.3" fill="#fff"/><circle cx="17" cy="17" r="5.6" fill="#1a73e8"/></svg>
<div class="a" style="left:732px;top:763px;width:14px;height:2px;background:#111"></div>
<div class="a" style="left:779px;top:728px;width:33px;height:33px;border-radius:50%;background:#1a73e8;box-shadow:0 1px 2px rgba(0,0,0,.3)"></div>
<svg class="a" style="left:784px;top:735px" width="23" height="19" viewBox="0 0 23 19"><path d="M2 5C2 4.4 2.4 4 3 4H7L8.5 2H14.5L16 4H20C20.6 4 21 4.4 21 5V16C21 16.6 20.6 17 20 17H3C2.4 17 2 16.6 2 16Z" fill="#fff"/><circle cx="11.5" cy="10.5" r="4.3" fill="#6c9cf0"/><circle cx="11.5" cy="10.5" r="3" fill="#1a73e8" opacity="0.6"/></svg>
<!-- tray -->
<div class="a" style="left:1055px;top:726px;width:68px;height:35px;border-radius:18px;overflow:hidden;background:#f6f6f8">
  <div class="a" style="left:0;top:0;width:36px;height:35px;background:#fafafa"></div>
  <div class="a" style="left:2px;top:6px;width:32px;height:1px;background:#b8c0c8"></div>
  <div class="a" style="left:4px;top:10px;width:28px;height:2px;background:#a8c8d8"></div>
  <div class="a" style="left:18px;top:13px;width:1px;height:14px;background:#ccc"></div>
  <div class="a" style="left:4px;top:26px;width:28px;height:2px;background:#9cc4d4"></div>
  <div class="a" style="left:4px;top:30px;width:20px;height:1px;background:#bbb"></div>
  <div class="a" style="left:33px;top:2px;width:2px;height:20px;background:#4a4a5a"></div>
  <div class="a" style="left:36px;top:0;width:32px;height:35px;background:#f3f1f6"></div>
  <div class="a" style="left:39px;top:6px;width:10px;height:27px;background:#7a5cb0"></div>
  <div class="a" style="left:40px;top:9px;width:8px;height:4px;background:#fff"></div>
  <div class="a" style="left:40px;top:15px;width:8px;height:3px;background:#fff"></div>
  <div class="a" style="left:40px;top:20px;width:8px;height:3px;background:#fff"></div>
  <div class="a" style="left:53px;top:6px;width:11px;height:27px;background:#8363ba"></div>
  <div class="a" style="left:54px;top:9px;width:9px;height:4px;background:#fff"></div>
  <div class="a" style="left:54px;top:15px;width:9px;height:3px;background:#fff"></div>
  <div class="a" style="left:44px;top:24px;width:6px;height:9px;background:#3a3550"></div>
</div>
<div class="a" style="left:1131px;top:726px;width:42px;height:35px;border-radius:18px 5px 5px 18px;background:#efeff6"></div>
<div class="a" style="left:1144px;top:736px;width:16px;height:16px;border-radius:50%;background:#1b1b1f;color:#fff;font-size:10.5px;text-align:center;line-height:16px;font-weight:bold">1</div>
<div class="a" style="left:1177px;top:726px;width:60px;height:35px;border-radius:5px;background:#efeff6"></div>
<div class="a" style="left:1177px;top:736px;width:60px;text-align:center;font-size:14px;color:#1f1f23">Dec 5</div>
<div class="a" style="left:1241px;top:726px;width:119px;height:35px;border-radius:5px 18px 18px 5px;background:#efeff6"></div>
<div class="a" style="left:1254px;top:736px;font-size:14px;color:#1f1f23;white-space:nowrap">8:42&nbsp; US</div>
<svg class="a" style="left:1313px;top:737px" width="16" height="13" viewBox="0 0 16 13"><path d="M0.5 4C5 -0.7 11 -0.7 15.5 4L8 12.5Z" fill="#1f1f23"/></svg>
<svg class="a" style="left:1337px;top:735px" width="10" height="18" viewBox="0 0 10 18"><rect x="3.5" y="0.5" width="3" height="2" fill="#1f1f23"/><rect x="1.5" y="2.5" width="7" height="14" rx="1" stroke="#1f1f23" stroke-width="1.5" fill="none"/><rect x="3" y="7" width="4" height="8.5" fill="#1f1f23"/></svg>
</div></body></html>
